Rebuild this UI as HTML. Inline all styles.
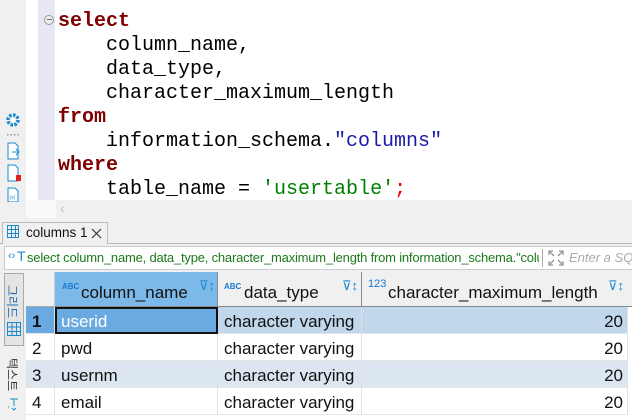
<!DOCTYPE html><html><head><style>
*{margin:0;padding:0;box-sizing:border-box}
body{width:632px;height:420px;overflow:hidden;background:#f0f0f0;position:relative;font-family:"Liberation Sans","Noto Sans CJK KR",sans-serif}
.a{position:absolute}
.code{font-family:"Liberation Mono",monospace;font-size:20px;line-height:24px;white-space:pre;color:#000}
.k{color:#7f0000;font-weight:bold}
.s{color:#1a1aa6}.g{color:#008000}
.cell{position:absolute;height:27px;line-height:29px;font-size:17px;color:#111;border-right:1px solid #e2e2e2;border-bottom:1px solid #e6e6e6;padding-left:6px}
</style></head><body>
<div class="a" style="left:26px;top:0;width:606px;height:200px;background:#fff"></div>
<div class="a" style="left:38px;top:0;width:17px;height:200px;background:#e8e8f4"></div>
<div class="a" style="left:44px;top:15px;width:10px;height:10px;border:1px solid #999;border-radius:50%;background:#eee"></div>
<div class="a" style="left:47px;top:19px;width:5px;height:1px;background:#666"></div>
<div class="a code" style="left:58px;top:10px"><span class="k">select</span>
    column_name,
    data_type,
    character_maximum_length
<span class="k">from</span>
    information_schema.<span class="s">"columns"</span>
<span class="k">where</span>
    table_name = <span class="g">'usertable'</span><span style="color:#e00">;</span></div>
<!-- left icons -->
<svg class="a" style="left:4px;top:110px" width="18" height="92" viewBox="0 0 18 92">
<circle cx="9" cy="10" r="5" fill="none" stroke="#1a8ad0" stroke-width="3.5" stroke-dasharray="2.5 1.4"/><circle cx="9" cy="10" r="2" fill="#fff"/>
<g fill="#999"><rect x="3" y="24" width="1.5" height="1.5"/><rect x="6.5" y="24" width="1.5" height="1.5"/><rect x="10" y="24" width="1.5" height="1.5"/><rect x="13.5" y="24" width="1.5" height="1.5"/></g>
<path d="M4 33h7l3 3v13H4z" fill="#fff" stroke="#1a8ad0"/><path d="M8 42h7M12 39l3 3-3 3" stroke="#1a8ad0" fill="none"/>
<path d="M4 55h7l3 3v13H4z" fill="#fff" stroke="#1a8ad0"/><rect x="12" y="65" width="5" height="6" fill="#e02020"/>
<path d="M4 78h7l3 3v11H4z" fill="#fff" stroke="#1a8ad0"/><text x="5.5" y="89" font-size="5" fill="#1a8ad0">(x)</text>
</svg>
<div class="a" style="left:26px;top:200px;width:30px;height:18px;background:#fafafa"></div>
<div class="a" style="left:60px;top:200px;color:#bbb;font-size:14px">‹</div>
<!-- tab -->
<div class="a" style="left:0;top:243px;width:632px;height:1px;background:#bbb"></div>
<div class="a" style="left:2px;top:222px;width:106px;height:22px;background:#f0f0f0;border:1px solid #bbb;border-bottom:none"></div>
<svg class="a" style="left:7px;top:225px" width="13" height="14"><g fill="none" stroke="#1a8ad0"><rect x=".5" y=".5" width="11" height="12"/><path d="M4.5 1v12M8.5 1v12M1 4.5h11M1 8.5h11"/></g></svg>
<div class="a" style="left:26px;top:225px;font-size:13.5px;color:#111">columns 1</div>
<svg class="a" style="left:91px;top:228px" width="11" height="11"><path d="M1 1l9 9M10 1l-9 9" stroke="#333" stroke-width="1.2"/></svg>
<!-- filter -->
<div class="a" style="left:4px;top:246px;width:628px;height:24px;background:#fff;border:1px solid #ccc;border-right:none"></div>
<div class="a" style="left:8px;top:250px;font-size:11px;color:#1a8ad0">‹›</div>
<div class="a" style="left:17px;top:248px;font-size:14px;color:#1a8ad0">T</div>
<div class="a" style="left:27px;top:250px;font-size:13px;color:#1a7a1a;white-space:nowrap;width:512px;overflow:hidden;letter-spacing:-0.2px">select column_name, data_type, character_maximum_length from information_schema."columns"</div>
<div class="a" style="left:542px;top:249px;width:1px;height:18px;background:#aaa"></div>
<svg class="a" style="left:548px;top:250px" width="16" height="16"><g stroke="#777" fill="none"><path d="M1 5V1h4M11 1h4v4M15 11v4h-4M5 15H1v-4M2 2l4 4M14 2l-4 4M14 14l-4-4M2 14l4-4"/></g></svg>
<div class="a" style="left:569px;top:250px;font-size:13px;color:#aaa;font-style:italic;white-space:nowrap">Enter a SQL</div>
<!-- side panel -->
<div class="a" style="left:4px;top:273px;width:20px;height:73px;background:#e4e4e4;border:1px solid #aaa"></div>
<div class="a" style="font-size:12px;color:#1a6ab0;transform:rotate(90deg);transform-origin:0 0;left:21px;top:285px">그리드</div>
<svg class="a" style="left:7px;top:322px" width="14" height="14"><g fill="none" stroke="#1a8ad0"><rect x=".5" y=".5" width="13" height="13"/><path d="M5 1v13M9.5 1v13M1 5h13M1 9.5h13"/></g></svg>
<div class="a" style="left:21px;top:358px;font-size:12px;color:#333;transform:rotate(90deg);transform-origin:0 0">텍스트</div>
<svg class="a" style="left:8px;top:398px" width="12" height="14"><g stroke="#1a8ad0" fill="none"><path d="M2 1h8M6 1v7M4 10l2 2 2-2M1 9l-1 0"/></g></svg>
<!-- table -->
<div class="a" style="left:26px;top:272px;width:606px;height:148px;background:#fff"></div>
<div class="a" style="left:26px;top:272px;width:29px;height:35px;background:#f0f0f0;border-right:1px solid #ccc;border-bottom:1px solid #aaa"></div>
<div class="a" style="left:55px;top:272px;width:163px;height:35px;background:#7db9e8;border-right:1px solid #888;border-bottom:1px solid #888"></div>
<div class="a" style="left:218px;top:272px;width:144px;height:35px;background:#f0f0f0;border-right:1px solid #888;border-bottom:1px solid #888"></div>
<div class="a" style="left:362px;top:272px;width:270px;height:35px;background:#f0f0f0;border-bottom:1px solid #888"></div>
<div class="a" style="left:62px;top:282px;font-size:8px;color:#1a7ad0;font-weight:bold">ABC</div>
<div class="a" style="left:81px;top:283px;font-size:17px;color:#111">column_name</div>
<div class="a" style="left:199px;top:278px;font-size:13px;color:#1a8ad0">⊽↕</div>
<div class="a" style="left:224px;top:282px;font-size:8px;color:#1a7ad0;font-weight:bold">ABC</div>
<div class="a" style="left:244px;top:283px;font-size:17px;color:#111">data_type</div>
<div class="a" style="left:342px;top:278px;font-size:13px;color:#1a8ad0">⊽↕</div>
<div class="a" style="left:368px;top:278px;font-size:11px;color:#1a7ad0">123</div>
<div class="a" style="left:388px;top:283px;font-size:17px;color:#111">character_maximum_length</div>
<div class="a" style="left:608px;top:278px;font-size:13px;color:#1a8ad0">⊽↕</div>

<div class="cell" style="left:26px;top:307px;width:29px;background:#6aaae0;font-weight:bold">1</div>
<div class="cell" style="left:55px;top:307px;width:163px;background:#6aaae0;color:#fff;border:2px solid #111;line-height:25px;padding-left:4px">userid</div>
<div class="cell" style="left:218px;top:307px;width:144px;background:#c0d7ec">character varying</div>
<div class="cell" style="left:362px;top:307px;width:266px;background:#c0d7ec;text-align:right;padding-right:4px">20</div>

<div class="cell" style="left:26px;top:334px;width:29px;background:#fff">2</div>
<div class="cell" style="left:55px;top:334px;width:163px">pwd</div>
<div class="cell" style="left:218px;top:334px;width:144px">character varying</div>
<div class="cell" style="left:362px;top:334px;width:266px;text-align:right;padding-right:4px">20</div>

<div class="cell" style="left:26px;top:361px;width:29px;background:#dce6f1">3</div>
<div class="cell" style="left:55px;top:361px;width:163px;background:#dce6f1">usernm</div>
<div class="cell" style="left:218px;top:361px;width:144px;background:#dce6f1">character varying</div>
<div class="cell" style="left:362px;top:361px;width:266px;background:#dce6f1;text-align:right;padding-right:4px">20</div>

<div class="cell" style="left:26px;top:388px;width:29px;background:#fff">4</div>
<div class="cell" style="left:55px;top:388px;width:163px">email</div>
<div class="cell" style="left:218px;top:388px;width:144px">character varying</div>
<div class="cell" style="left:362px;top:388px;width:266px;text-align:right;padding-right:4px">20</div>
</body></html>
